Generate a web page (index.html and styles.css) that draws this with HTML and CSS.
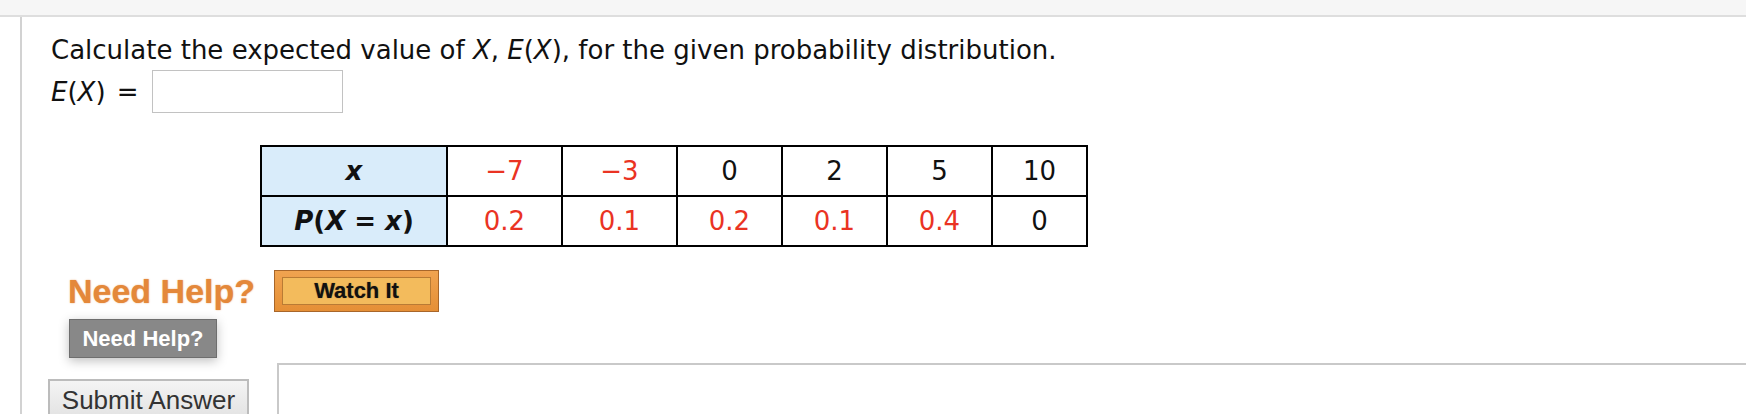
FILE: index.html
```html
<!DOCTYPE html>
<html lang="en">
<head>
<meta charset="utf-8">
<title>Expected value</title>
<link rel="stylesheet" href="styles.css">
</head>
<body>
<div class="topbar"></div>
<div class="main">
  <p class="question">Calculate the expected value of <i>X</i>, <i>E</i>(<i>X</i>), for the given probability distribution.</p>
  <div class="answer-row">
    <span class="label"><i>E</i>(<i>X</i>) <span class="eq">=</span></span>
    <input class="answer-input" type="text">
  </div>
  <table class="dist">
    <colgroup>
      <col class="c-head"><col class="c-w1"><col class="c-w1"><col class="c-w2"><col class="c-w2"><col class="c-w2"><col class="c-w3">
    </colgroup>
    <tr>
      <th class="head"><i>x</i></th>
      <td class="red">&minus;7</td>
      <td class="red">&minus;3</td>
      <td>0</td>
      <td>2</td>
      <td>5</td>
      <td>10</td>
    </tr>
    <tr>
      <th class="head"><i>P</i>(<i>X</i> = <i>x</i>)</th>
      <td class="red">0.2</td>
      <td class="red">0.1</td>
      <td class="red">0.2</td>
      <td class="red">0.1</td>
      <td class="red">0.4</td>
      <td>0</td>
    </tr>
  </table>
  <div class="help-row">
    <span class="help-title">Need Help?</span>
    <button class="watch"><span class="watch-inner">Watch It</span></button>
  </div>
  <button class="help-btn">Need Help?</button>
  <div class="submit-row">
    <button class="submit">Submit Answer</button>
    <div class="response"></div>
  </div>
</div>
</body>
</html>
```

FILE: styles.css
```css
html, body {
  margin: 0;
  padding: 0;
  background: #fff;
  overflow: hidden;
}
body {
  font-family: "DejaVu Sans", Verdana, sans-serif;
  color: #111;
  height: 414px;
}
.topbar {
  height: 15px;
  background: #f6f6f6;
  border-bottom: 2px solid #dedede;
}
.main {
  margin-left: 20px;
  border-left: 2px solid #d2d2d2;
  padding-left: 29px;
  height: 400px;
}
.question {
  margin: 0;
  padding-top: 18px;
  font-size: 26px;
  line-height: 30px;
}
.answer-row {
  display: flex;
  align-items: center;
  margin-top: 5px;
  font-size: 26px;
}
.label {
  width: 101px;
}
.eq {
  margin-left: 3px;
}
.answer-input {
  box-sizing: border-box;
  width: 191px;
  height: 43px;
  border: 1px solid #c2c2c2;
  margin: 0;
  padding: 0 6px;
  font-size: 22px;
  background: #fff;
}
.dist {
  margin-top: 32px;
  margin-left: 209px;
  border-collapse: collapse;
  table-layout: fixed;
  width: 826px;
}
.c-head { width: 186px; }
.c-w1 { width: 115px; }
.c-w2 { width: 105px; }
.c-w3 { width: 95px; }
.dist th, .dist td {
  border: 2px solid #000;
  height: 48px;
  padding: 0;
  text-align: center;
  font-size: 26px;
  font-weight: normal;
}
.dist th.head {
  background: #d9ecfa;
  font-weight: bold;
}
.dist td.red {
  color: #ea3323;
}
.help-row {
  display: flex;
  align-items: flex-start;
  margin-top: 23px;
}
.help-title {
  margin-left: 17px;
  margin-top: 2px;
  width: 206px;
  font-family: "Liberation Sans", Arial, sans-serif;
  font-weight: bold;
  font-size: 34px;
  line-height: 38px;
  color: #e4883a;
  text-shadow: 0 0 1.5px rgba(228, 136, 58, 0.8);
}
.watch {
  box-sizing: border-box;
  width: 165px;
  height: 42px;
  margin: 0;
  padding: 6px 7px;
  background: linear-gradient(#f0a350, #e58f36);
  border: 1px solid #a8662a;
  display: flex;
}
.watch-inner {
  flex: 1;
  display: flex;
  align-items: center;
  justify-content: center;
  background: #f3bb5c;
  border: 1px solid #b97b34;
  font-family: "Liberation Sans", Arial, sans-serif;
  font-weight: bold;
  font-size: 22px;
  color: #111;
  text-shadow: 0 0 1px rgba(0, 0, 0, 0.5);
}
.help-btn {
  display: block;
  box-sizing: border-box;
  width: 148px;
  height: 39px;
  margin: 7px 0 0 18px;
  padding: 0;
  background: #888;
  border: 1px solid #6e6e6e;
  color: #fff;
  font-family: "Liberation Sans", Arial, sans-serif;
  font-weight: bold;
  font-size: 22px;
  box-shadow: 0 3px 10px rgba(0, 0, 0, 0.25);
}
.submit-row {
  display: flex;
  align-items: flex-start;
  margin-top: 5px;
  margin-left: -3px;
  margin-right: -10px;
}
.submit {
  box-sizing: border-box;
  width: 201px;
  height: 40px;
  margin: 16px 28px 0 0;
  padding: 0;
  background: linear-gradient(#f4f4f4, #e2e2e2);
  border: 2px solid #bcbcbc;
  border-bottom: 0;
  color: #333;
  font-family: "Liberation Sans", Arial, sans-serif;
  font-size: 26px;
  text-align: center;
  line-height: 30px;
}
.response {
  flex: 1;
  height: 60px;
  border: 2px solid #c9c9c9;
}
```
